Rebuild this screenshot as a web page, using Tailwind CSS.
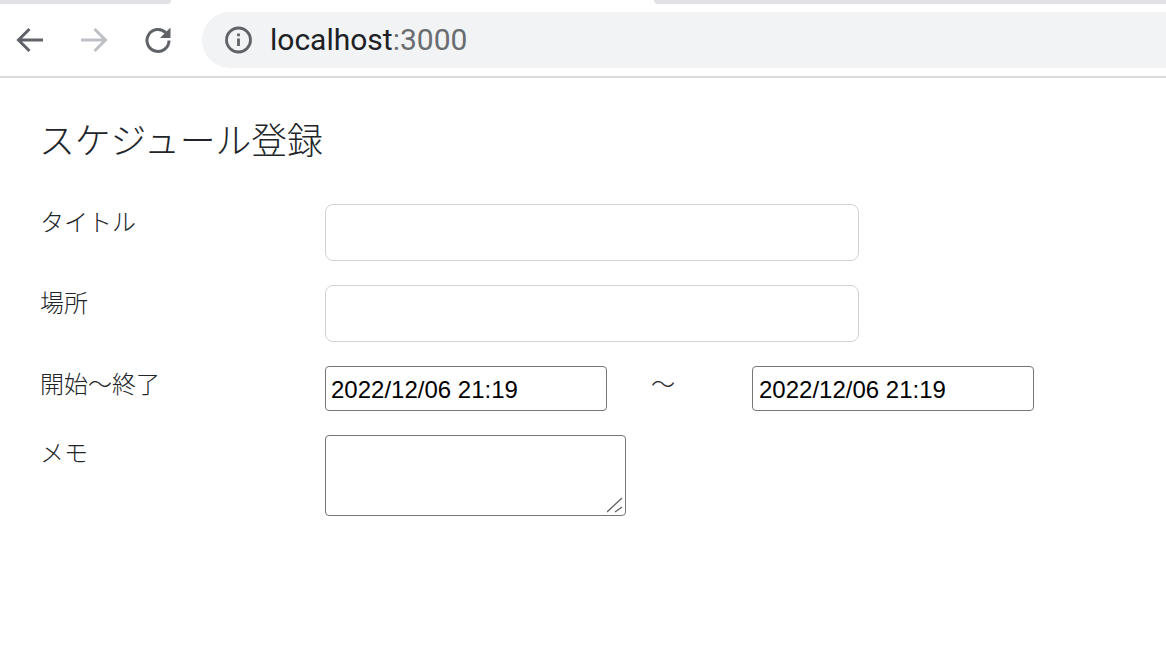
<!DOCTYPE html>
<html lang="ja">
<head>
    <meta charset="UTF-8">
    <title>スケジュール登録</title>
    <script src="https://cdn.jsdelivr.net/npm/@tailwindcss/browser@4"></script>
</head>
<body class="bg-white text-[#212529] overflow-hidden font-['Liberation_Sans','Noto_Sans_CJK_JP',sans-serif]">
    <!-- browser toolbar -->
    <div class="h-[78px] border-b-2 border-[#dadbdd] relative">
        <div class="flex justify-between h-1">
            <div class="w-[171px] bg-[#dfe1e5] rounded-br-xl"></div>
            <div class="w-[512px] bg-[#dfe1e5] rounded-bl-xl"></div>
        </div>
        <div class="flex items-center pt-2">
            <div class="flex items-center gap-[32px] pl-[15px] w-[202px]">
                <svg class="w-8 h-8" viewBox="0 0 32 32" fill="none" stroke="#5f6368" stroke-width="3"><path d="M28 16H4M14.500 5 3.500 16 14.500 27"/></svg>
                <svg class="w-8 h-8" viewBox="0 0 32 32" fill="none" stroke="#bdc1c6" stroke-width="3"><path d="M2 16H26M15.500 5 26.500 16 15.500 27"/></svg>
                <svg class="w-8 h-8" viewBox="0 0 32 32"><path d="M26 16.500a11 11 0 1 1-3.200-7.800" fill="none" stroke="#5f6368" stroke-width="3"/><path d="M27.500 3.500v10.500h-10.500z" fill="#5f6368"/></svg>
            </div>
            <div class="flex-1 h-14 bg-[#f1f3f4] rounded-l-[28px] flex items-center pl-[22px]">
                <svg class="w-7 h-7 shrink-0" viewBox="0 0 28 28" fill="none"><circle cx="14.500" cy="14" r="12" stroke="#5f6368" stroke-width="2.800"/><path d="M14.500 12.500v7.500M14.500 7.500v2.800" stroke="#5f6368" stroke-width="2.800"/></svg>
                <span class="ml-[18px] text-[30px] leading-none font-['Roboto',sans-serif] text-[#202124]">localhost<span class="text-[#696c70]">:3000</span></span>
            </div>
        </div>
    </div>

    <!-- form -->
    <div class="pl-[40px]">
        <h1 class="h-[126px] pt-[39px] -ml-px text-[35.800px] leading-[50px] font-light">スケジュール登録</h1>
        <div class="flex flex-col gap-6 text-2xl font-light">
            <div class="flex">
                <label class="w-[285px] pt-px leading-9">タイトル</label>
                <input type="text" class="w-[534px] h-[57px] bg-white border border-[#ced4da] rounded-lg">
            </div>
            <div class="flex">
                <label class="w-[285px] pt-px leading-9">場所</label>
                <input type="text" class="w-[534px] h-[57px] bg-white border border-[#ced4da] rounded-lg">
            </div>
            <div class="flex">
                <label class="w-[285px] pt-px leading-9">開始〜終了</label>
                <input type="text" readonly value="2022/12/06 21:19" class="w-[282px] h-[45px] pl-[5px] pt-[2px] border border-[#767676] rounded-[4px] text-black text-2xl font-normal">
                <span class="ml-[44px] w-[101px] pt-px leading-9">〜</span>
                <input type="text" readonly value="2022/12/06 21:19" class="w-[282px] h-[45px] pl-[6px] pt-[2px] border border-[#767676] rounded-[4px] text-black text-2xl font-normal">
            </div>
            <div class="flex">
                <label class="w-[285px] pt-px leading-9">メモ</label>
                <div class="relative w-[301px] h-[81px]">
                    <textarea class="w-full h-full block resize-none border border-[#767676] rounded-[4px]"></textarea>
                    <svg class="absolute right-[3px] bottom-[3px] w-4 h-4" viewBox="0 0 16 16" stroke="#5f5f5f" stroke-width="1.300"><path d="M0 15 15 1M8 15 15 10"/></svg>
                </div>
            </div>
        </div>
    </div>
</body>
</html>
